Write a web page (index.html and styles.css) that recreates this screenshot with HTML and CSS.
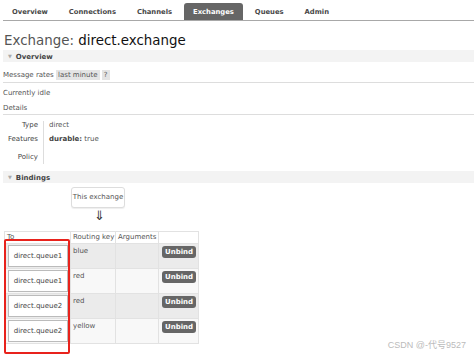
FILE: index.html
```html
<!DOCTYPE html>
<html>
<head>
<meta charset="utf-8">
<link rel="stylesheet" href="styles.css">
</head>
<body>
<div class="page">
  <nav class="tabs">
    <span class="tab">Overview</span>
    <span class="tab">Connections</span>
    <span class="tab">Channels</span>
    <span class="tab active">Exchanges</span>
    <span class="tab">Queues</span>
    <span class="tab">Admin</span>
  </nav>
  <h1 class="title"><span class="title-kind">Exchange:</span> <span class="title-name">direct.exchange</span></h1>

  <div class="section-head"><span class="tri">&#9660;</span>Overview</div>
  <div class="rates-row">Message rates <span class="pill">last minute</span> <span class="pill">?</span></div>
  <div class="plain-row">Currently idle</div>
  <div class="details-row">Details</div>
  <div class="facts">
    <div class="fact-labels">
      <div class="fl fl-type">Type</div>
      <div class="fl fl-feat">Features</div>
      <div class="fl fl-pol">Policy</div>
    </div>
    <div class="fact-values">
      <div class="fv fv-type">direct</div>
      <div class="fv fv-feat"><b>durable:</b> true</div>
      <div class="fv fv-pol"></div>
    </div>
  </div>

  <div class="section-head bindings-head"><span class="tri">&#9660;</span>Bindings</div>
  <div class="source-wrap">
    <div class="source">This exchange</div>
    <div class="arrow">&#8659;</div>
  </div>
  <table class="bindings">
    <colgroup><col class="w-to"><col class="w-key"><col class="w-args"><col class="w-act"></colgroup>
    <thead>
      <tr><th>To</th><th>Routing key</th><th>Arguments</th><th></th></tr>
    </thead>
    <tbody>
      <tr class="odd"><td class="c-to"><div class="queue">direct.queue1</div></td><td class="c-key">blue</td><td></td><td class="c-act"><span class="btn">Unbind</span></td></tr>
      <tr class="even"><td class="c-to"><div class="queue">direct.queue1</div></td><td class="c-key">red</td><td></td><td class="c-act"><span class="btn">Unbind</span></td></tr>
      <tr class="odd"><td class="c-to"><div class="queue">direct.queue2</div></td><td class="c-key">red</td><td></td><td class="c-act"><span class="btn">Unbind</span></td></tr>
      <tr class="even"><td class="c-to"><div class="queue">direct.queue2</div></td><td class="c-key">yellow</td><td></td><td class="c-act"><span class="btn">Unbind</span></td></tr>
    </tbody>
  </table>
  <div class="highlight"></div>
  <div class="watermark">CSDN @-代号9527</div>
</div>
</body>
</html>
```
FILE: styles.css
```css
html, body { margin: 0; padding: 0; background: #fff; }
body { font-family: "DejaVu Sans", Verdana, sans-serif; font-size: 7px; color: #484848; }
.page { position: relative; width: 474px; height: 355px; overflow: hidden; }

.tabs { display: flex; margin: 3px 0 0 3px; height: 17px; border-bottom: 1px solid #a8a8a8; }
.tab { display: flex; align-items: center; padding: 0 9px; margin-right: 3px; font-size: 6.8px; font-weight: bold; color: #484848; border-radius: 3px 3px 0 0; }
.tab.active { background: #666; color: #fff; }

.title { margin: 11px 0 0 4px; font-size: 13.4px; font-weight: normal; line-height: 17px; height: 17px; }
.title-kind { color: #555; }
.title-name { color: #111; }

.section-head { margin: 1px 0 0 3px; height: 12px; line-height: 12px; background: #f3f3f3; font-weight: bold; color: #444; padding-left: 5px; }
.tri { font-size: 5px; color: #aaa; margin-right: 4px; vertical-align: 1px; }

.rates-row { margin: 7px 0 0 3px; height: 13px; line-height: 13px; border-bottom: 1px solid #ddd; color: #555; }
.pill { background: #e4e4e4; padding: 1px 2px; color: #555; }
.plain-row { margin: 4px 0 0 3px; height: 12px; line-height: 12px; color: #555; }
.details-row { margin: 3px 0 0 3px; height: 12px; line-height: 12px; border-bottom: 1px solid #ddd; color: #555; }

.facts { display: flex; margin: 6px 0 0 0; }
.fact-labels { width: 38px; text-align: right; padding-right: 5px; border-right: 1px solid #ddd; color: #444; height: 43px; }
.fact-values { padding-left: 5px; color: #555; }
.fl, .fv { height: 13px; line-height: 13px; }
.fl-type, .fv-type { margin-top: -2px; }
.fl-feat, .fv-feat { margin-top: 1px; }
.fl-pol { margin-top: 5px; }
.fv-feat b { color: #444; }

.bindings-head { margin-top: 7px; }
.source-wrap { width: 54px; margin: 4px 0 0 71px; text-align: center; }
.source { height: 19px; line-height: 19px; border: 1px solid #ddd; border-radius: 3px; background: #fff; color: #555; box-shadow: 0 1px 1px #eee; }
.arrow { font-size: 13px; line-height: 14px; height: 14px; color: #333; margin-top: 1px; padding-left: 3px; }

.bindings { margin: 8px 0 0 4px; border-collapse: collapse; table-layout: fixed; width: 194px; }
.w-to { width: 66px; }
.w-key { width: 45px; }
.w-args { width: 43px; }
.w-act { width: 40px; }
.bindings th, .bindings td { border: 1px solid #e2e2e2; padding: 0 0 0 2px; vertical-align: top; text-align: left; font-weight: normal; color: #555; white-space: nowrap; overflow: hidden; }
.bindings th { height: 11px; line-height: 11px; background: #fff; }
.bindings td { height: 22px; line-height: 11px; padding-top: 2px; }
.bindings td.c-to { height: 22px; padding: 1px 2px 1px 3px; }
.bindings td.c-act { padding: 2px 0 0 3px; }
tr.odd td { background: #ebebeb; }
tr.even td { background: #f8f8f8; }
.queue { width: 58px; height: 20px; line-height: 20px; background: #fff; border: 1px solid #bbb; text-align: center; color: #444; }
.btn { display: inline-block; height: 12px; line-height: 12px; padding: 0 3px; background: #666; color: #fff; font-weight: bold; border-radius: 3px; }

.highlight { position: absolute; left: 4px; top: 239px; width: 62px; height: 111px; border: 2px solid #e8221c; border-radius: 2px; }
.watermark { position: absolute; right: 8px; bottom: 4px; font-family: "Liberation Sans", "Noto Sans CJK SC", sans-serif; font-size: 9px; color: #bbb; }
```
